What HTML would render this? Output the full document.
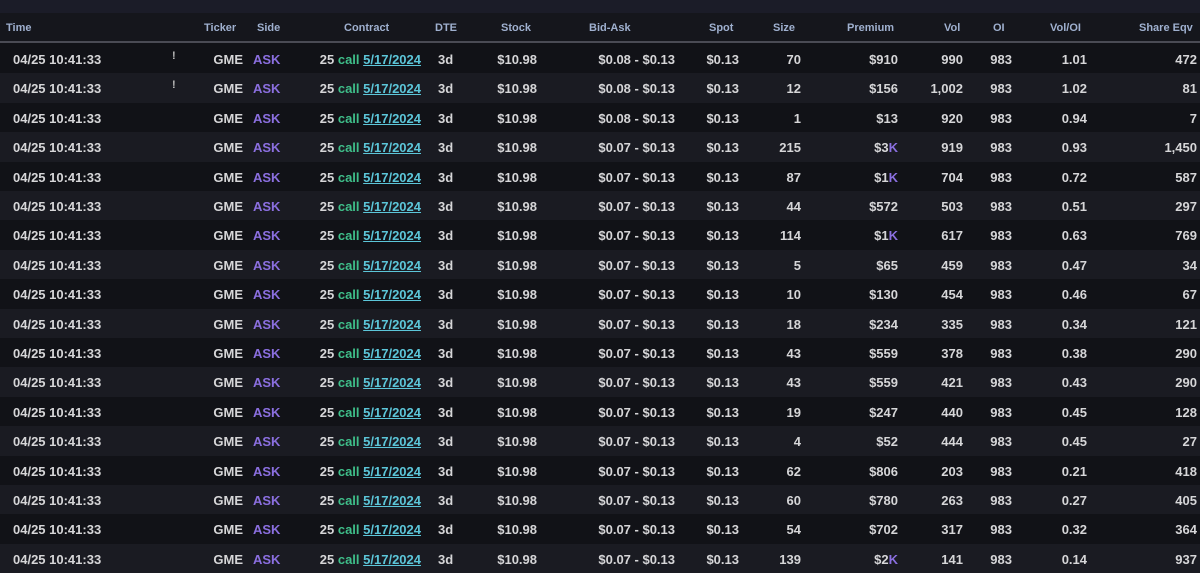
<!DOCTYPE html>
<html><head><meta charset="utf-8"><style>
*{margin:0;padding:0;box-sizing:border-box}
body{width:1200px;height:570px;overflow:hidden;background:#111217;font-family:"Liberation Sans",Arial,sans-serif;font-weight:bold;position:relative}
.top{position:absolute;left:0;top:0;width:1200px;height:13px;background:#1b1c28}
.hd{position:absolute;left:0;top:13px;width:1200px;height:30px;background:#15161c;border-bottom:2px solid #4a4b54;font-size:11px;color:#9fb0cf}
.hd span{position:absolute;top:9px;white-space:nowrap}
.row{position:absolute;left:0;width:1200px;height:29.4px;font-size:13px;color:#d6d6d8}
.row.d{background:#111217}.row.l{background:#1a1b22}
.row span{position:absolute;top:8px;white-space:nowrap}
.t{left:13px}.x{left:172px;font-size:11px;color:#bbb;top:6px!important}
.tk{right:957px}.sd{left:253px;color:#8b6fe0}
.ct{right:779px}.ct i{font-style:normal;color:#3fbf8a}.ct u{color:#5cc6d9;text-decoration:underline}
.dt{left:438px}.st{right:663px}.ba{right:525px}.sp{right:461px}.sz{right:399px}
.pr{right:302px}.pr b{color:#8a6fe0}.vo{right:237px}.oi{right:188px}.vr{right:113px}.se{right:3px}
</style></head><body>
<div class="top"></div>
<div class="hd">
<span style="left:6px">Time</span><span style="left:204px">Ticker</span><span style="left:257px">Side</span>
<span style="left:344px">Contract</span><span style="left:435px">DTE</span><span style="left:501px">Stock</span>
<span style="left:589px">Bid-Ask</span><span style="left:709px">Spot</span><span style="left:773px">Size</span>
<span style="left:847px">Premium</span><span style="left:944px">Vol</span><span style="left:993px">OI</span>
<span style="left:1050px">Vol/OI</span><span style="left:1139px">Share Eqv</span>
</div>

<div class="row d" style="top:44px"><span class="t">04/25 10:41:33</span><span class="x">!</span><span class="tk">GME</span><span class="sd">ASK</span><span class="ct">25 <i>call</i> <u>5/17/2024</u></span><span class="dt">3d</span><span class="st">$10.98</span><span class="ba">$0.08 - $0.13</span><span class="sp">$0.13</span><span class="sz">70</span><span class="pr">$910</span><span class="vo">990</span><span class="oi">983</span><span class="vr">1.01</span><span class="se">472</span></div>
<div class="row l" style="top:73.4px"><span class="t">04/25 10:41:33</span><span class="x">!</span><span class="tk">GME</span><span class="sd">ASK</span><span class="ct">25 <i>call</i> <u>5/17/2024</u></span><span class="dt">3d</span><span class="st">$10.98</span><span class="ba">$0.08 - $0.13</span><span class="sp">$0.13</span><span class="sz">12</span><span class="pr">$156</span><span class="vo">1,002</span><span class="oi">983</span><span class="vr">1.02</span><span class="se">81</span></div>
<div class="row d" style="top:102.8px"><span class="t">04/25 10:41:33</span><span class="tk">GME</span><span class="sd">ASK</span><span class="ct">25 <i>call</i> <u>5/17/2024</u></span><span class="dt">3d</span><span class="st">$10.98</span><span class="ba">$0.08 - $0.13</span><span class="sp">$0.13</span><span class="sz">1</span><span class="pr">$13</span><span class="vo">920</span><span class="oi">983</span><span class="vr">0.94</span><span class="se">7</span></div>
<div class="row l" style="top:132.2px"><span class="t">04/25 10:41:33</span><span class="tk">GME</span><span class="sd">ASK</span><span class="ct">25 <i>call</i> <u>5/17/2024</u></span><span class="dt">3d</span><span class="st">$10.98</span><span class="ba">$0.07 - $0.13</span><span class="sp">$0.13</span><span class="sz">215</span><span class="pr">$3<b>K</b></span><span class="vo">919</span><span class="oi">983</span><span class="vr">0.93</span><span class="se">1,450</span></div>
<div class="row d" style="top:161.6px"><span class="t">04/25 10:41:33</span><span class="tk">GME</span><span class="sd">ASK</span><span class="ct">25 <i>call</i> <u>5/17/2024</u></span><span class="dt">3d</span><span class="st">$10.98</span><span class="ba">$0.07 - $0.13</span><span class="sp">$0.13</span><span class="sz">87</span><span class="pr">$1<b>K</b></span><span class="vo">704</span><span class="oi">983</span><span class="vr">0.72</span><span class="se">587</span></div>
<div class="row l" style="top:191px"><span class="t">04/25 10:41:33</span><span class="tk">GME</span><span class="sd">ASK</span><span class="ct">25 <i>call</i> <u>5/17/2024</u></span><span class="dt">3d</span><span class="st">$10.98</span><span class="ba">$0.07 - $0.13</span><span class="sp">$0.13</span><span class="sz">44</span><span class="pr">$572</span><span class="vo">503</span><span class="oi">983</span><span class="vr">0.51</span><span class="se">297</span></div>
<div class="row d" style="top:220.4px"><span class="t">04/25 10:41:33</span><span class="tk">GME</span><span class="sd">ASK</span><span class="ct">25 <i>call</i> <u>5/17/2024</u></span><span class="dt">3d</span><span class="st">$10.98</span><span class="ba">$0.07 - $0.13</span><span class="sp">$0.13</span><span class="sz">114</span><span class="pr">$1<b>K</b></span><span class="vo">617</span><span class="oi">983</span><span class="vr">0.63</span><span class="se">769</span></div>
<div class="row l" style="top:249.8px"><span class="t">04/25 10:41:33</span><span class="tk">GME</span><span class="sd">ASK</span><span class="ct">25 <i>call</i> <u>5/17/2024</u></span><span class="dt">3d</span><span class="st">$10.98</span><span class="ba">$0.07 - $0.13</span><span class="sp">$0.13</span><span class="sz">5</span><span class="pr">$65</span><span class="vo">459</span><span class="oi">983</span><span class="vr">0.47</span><span class="se">34</span></div>
<div class="row d" style="top:279.2px"><span class="t">04/25 10:41:33</span><span class="tk">GME</span><span class="sd">ASK</span><span class="ct">25 <i>call</i> <u>5/17/2024</u></span><span class="dt">3d</span><span class="st">$10.98</span><span class="ba">$0.07 - $0.13</span><span class="sp">$0.13</span><span class="sz">10</span><span class="pr">$130</span><span class="vo">454</span><span class="oi">983</span><span class="vr">0.46</span><span class="se">67</span></div>
<div class="row l" style="top:308.6px"><span class="t">04/25 10:41:33</span><span class="tk">GME</span><span class="sd">ASK</span><span class="ct">25 <i>call</i> <u>5/17/2024</u></span><span class="dt">3d</span><span class="st">$10.98</span><span class="ba">$0.07 - $0.13</span><span class="sp">$0.13</span><span class="sz">18</span><span class="pr">$234</span><span class="vo">335</span><span class="oi">983</span><span class="vr">0.34</span><span class="se">121</span></div>
<div class="row d" style="top:338px"><span class="t">04/25 10:41:33</span><span class="tk">GME</span><span class="sd">ASK</span><span class="ct">25 <i>call</i> <u>5/17/2024</u></span><span class="dt">3d</span><span class="st">$10.98</span><span class="ba">$0.07 - $0.13</span><span class="sp">$0.13</span><span class="sz">43</span><span class="pr">$559</span><span class="vo">378</span><span class="oi">983</span><span class="vr">0.38</span><span class="se">290</span></div>
<div class="row l" style="top:367.4px"><span class="t">04/25 10:41:33</span><span class="tk">GME</span><span class="sd">ASK</span><span class="ct">25 <i>call</i> <u>5/17/2024</u></span><span class="dt">3d</span><span class="st">$10.98</span><span class="ba">$0.07 - $0.13</span><span class="sp">$0.13</span><span class="sz">43</span><span class="pr">$559</span><span class="vo">421</span><span class="oi">983</span><span class="vr">0.43</span><span class="se">290</span></div>
<div class="row d" style="top:396.8px"><span class="t">04/25 10:41:33</span><span class="tk">GME</span><span class="sd">ASK</span><span class="ct">25 <i>call</i> <u>5/17/2024</u></span><span class="dt">3d</span><span class="st">$10.98</span><span class="ba">$0.07 - $0.13</span><span class="sp">$0.13</span><span class="sz">19</span><span class="pr">$247</span><span class="vo">440</span><span class="oi">983</span><span class="vr">0.45</span><span class="se">128</span></div>
<div class="row l" style="top:426.2px"><span class="t">04/25 10:41:33</span><span class="tk">GME</span><span class="sd">ASK</span><span class="ct">25 <i>call</i> <u>5/17/2024</u></span><span class="dt">3d</span><span class="st">$10.98</span><span class="ba">$0.07 - $0.13</span><span class="sp">$0.13</span><span class="sz">4</span><span class="pr">$52</span><span class="vo">444</span><span class="oi">983</span><span class="vr">0.45</span><span class="se">27</span></div>
<div class="row d" style="top:455.6px"><span class="t">04/25 10:41:33</span><span class="tk">GME</span><span class="sd">ASK</span><span class="ct">25 <i>call</i> <u>5/17/2024</u></span><span class="dt">3d</span><span class="st">$10.98</span><span class="ba">$0.07 - $0.13</span><span class="sp">$0.13</span><span class="sz">62</span><span class="pr">$806</span><span class="vo">203</span><span class="oi">983</span><span class="vr">0.21</span><span class="se">418</span></div>
<div class="row l" style="top:485px"><span class="t">04/25 10:41:33</span><span class="tk">GME</span><span class="sd">ASK</span><span class="ct">25 <i>call</i> <u>5/17/2024</u></span><span class="dt">3d</span><span class="st">$10.98</span><span class="ba">$0.07 - $0.13</span><span class="sp">$0.13</span><span class="sz">60</span><span class="pr">$780</span><span class="vo">263</span><span class="oi">983</span><span class="vr">0.27</span><span class="se">405</span></div>
<div class="row d" style="top:514.4px"><span class="t">04/25 10:41:33</span><span class="tk">GME</span><span class="sd">ASK</span><span class="ct">25 <i>call</i> <u>5/17/2024</u></span><span class="dt">3d</span><span class="st">$10.98</span><span class="ba">$0.07 - $0.13</span><span class="sp">$0.13</span><span class="sz">54</span><span class="pr">$702</span><span class="vo">317</span><span class="oi">983</span><span class="vr">0.32</span><span class="se">364</span></div>
<div class="row l" style="top:543.8px"><span class="t">04/25 10:41:33</span><span class="tk">GME</span><span class="sd">ASK</span><span class="ct">25 <i>call</i> <u>5/17/2024</u></span><span class="dt">3d</span><span class="st">$10.98</span><span class="ba">$0.07 - $0.13</span><span class="sp">$0.13</span><span class="sz">139</span><span class="pr">$2<b>K</b></span><span class="vo">141</span><span class="oi">983</span><span class="vr">0.14</span><span class="se">937</span></div>
</body></html>
